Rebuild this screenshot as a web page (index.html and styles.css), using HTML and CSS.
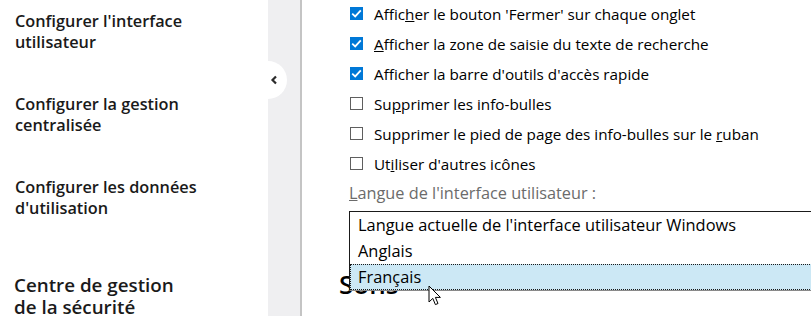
FILE: index.html
```html
<!DOCTYPE html>
<html lang="fr">
<head>
<meta charset="utf-8">
<title>Options</title>
<link rel="stylesheet" href="styles.css">
</head>
<body>
<div class="app">
  <nav class="nav">
    <div class="nav-item first">Configurer l'interface<br>utilisateur</div>
    <div class="nav-item">Configurer la gestion<br>centralisée</div>
    <div class="nav-item">Configurer les données<br>d'utilisation</div>
    <div class="nav-item big">Centre de gestion<br>de la sécurité</div>
  </nav>
  <div class="splitter">
    <div class="toggle">
      <svg width="8" height="10" viewBox="0 0 8 10"><path d="M6 1.5 L2.5 5 L6 8.5" fill="none" stroke="#2b2b2b" stroke-width="2.2"/></svg>
    </div>
  </div>
  <main class="content">
    <div class="row"><span class="box checked"><svg width="11" height="9" viewBox="0 0 11 9"><path d="M1.2 4.6 L4.2 7.4 L9.8 1.4" fill="none" stroke="#fff" stroke-width="1.8"/></svg></span><span>Affic<u>h</u>er le bouton 'Fermer' sur chaque onglet</span></div>
    <div class="row"><span class="box checked"><svg width="11" height="9" viewBox="0 0 11 9"><path d="M1.2 4.6 L4.2 7.4 L9.8 1.4" fill="none" stroke="#fff" stroke-width="1.8"/></svg></span><span><u>A</u>fficher la zone de saisie du texte de recherche</span></div>
    <div class="row"><span class="box checked"><svg width="11" height="9" viewBox="0 0 11 9"><path d="M1.2 4.6 L4.2 7.4 L9.8 1.4" fill="none" stroke="#fff" stroke-width="1.8"/></svg></span><span>Aff<u>i</u>cher la barre d'outils d'accès rapide</span></div>
    <div class="row"><span class="box"></span><span>Su<u>p</u>primer les info-bulles</span></div>
    <div class="row"><span class="box"></span><span>Supprimer le pied de page des info-bulles sur le <u>r</u>uban</span></div>
    <div class="row"><span class="box"></span><span>Ut<u>i</u>liser d'autres icônes</span></div>
    <div class="label"><u>L</u>angue de l'interface utilisateur :</div>
    <div class="combo-wrap">
      <div class="listbox">
        <div class="option">Langue actuelle de l'interface utilisateur Windows</div>
        <div class="option">Anglais</div>
        <div class="option selected">Français</div>
      </div>
      <h2 class="section">Sons</h2>
      <svg class="cursor" width="14" height="22" viewBox="0 0 14 22"><path d="M1 1 L1 17 L4.8 13.4 L7.4 19.6 L10 18.5 L7.4 12.4 L12.4 12.4 Z" fill="#fff" stroke="#000" stroke-width="1" stroke-linejoin="round"/></svg>
    </div>
  </main>
</div>
</body>
</html>
```
FILE: styles.css
```css
* { box-sizing: border-box; }
html, body {
  margin: 0;
  padding: 0;
  background: #fff;
}
body {
  width: 811px;
  height: 316px;
  overflow: hidden;
  font-family: "Open Sans", "Noto Sans", sans-serif;
  color: #000;
}
.app {
  display: flex;
  height: 316px;
}
.nav {
  width: 268px;
  flex: none;
  padding-left: 15px;
  background: #fff;
  display: flex;
  flex-direction: column;
}
.nav-item {
  font-size: 16.3px;
  font-weight: 600;
  line-height: 21px;
  color: #1a1a1a;
  margin-bottom: 41px;
  white-space: nowrap;
}
.nav-item.first {
  margin-top: 11px;
}
.nav-item.big {
  margin-top: 14px;
  margin-bottom: 0;
  font-size: 18.8px;
  line-height: 22px;
  margin-left: -1px;
}
.splitter {
  position: relative;
  width: 34px;
  flex: none;
  background: #efeff1;
  border-right: 2px solid #c4c4c4;
}
.toggle {
  position: absolute;
  left: -19px;
  top: 61px;
  width: 38px;
  height: 38px;
  border-radius: 50%;
  background: #fff;
  display: flex;
  align-items: center;
  justify-content: flex-end;
  padding-right: 9px;
}
.toggle svg { display: block; }
.content {
  flex: 1;
  padding-left: 47px;
  padding-top: 0;
  min-width: 0;
}
.row {
  height: 30px;
  display: flex;
  align-items: center;
  gap: 11px;
  font-size: 15.25px;
  white-space: nowrap;
  color: #000;
}
.row:first-child {
  margin-top: -1.5px;
}
.row:nth-child(6) {
  margin-bottom: 1.5px;
}
.box {
  width: 13px;
  height: 13px;
  flex: none;
  border: 1px solid #5f5f5f;
  background: #fff;
  display: flex;
  align-items: center;
  justify-content: center;
  margin-left: 1px;
}
.box.checked {
  background: #0078d7;
  border-color: #0078d7;
}
.box svg { display: block; }
.label {
  height: 26px;
  line-height: 26px;
  font-size: 16.3px;
  color: #6b6b6b;
  white-space: nowrap;
}
.combo-wrap {
  position: relative;
  padding-top: 62px;
}
.listbox {
  position: absolute;
  left: 0;
  top: 5px;
  width: 520px;
  background: #fff;
  border: 1px solid #1a1a1a;
  border-bottom-color: #8a8a8a;
  z-index: 2;
}
.option {
  height: 26px;
  line-height: 24px;
  padding-left: 7px;
  font-size: 16.4px;
  white-space: nowrap;
  border: 1px dotted transparent;
}
.option.selected {
  background: #cce8f5;
  border-color: #1a1a1a;
}
.section {
  margin: 0 0 0 -10px;
  font-size: 26px;
  font-weight: 600;
  line-height: 32px;
  color: #000;
}
.cursor {
  position: absolute;
  left: 79px;
  top: 79px;
  z-index: 3;
}
```
